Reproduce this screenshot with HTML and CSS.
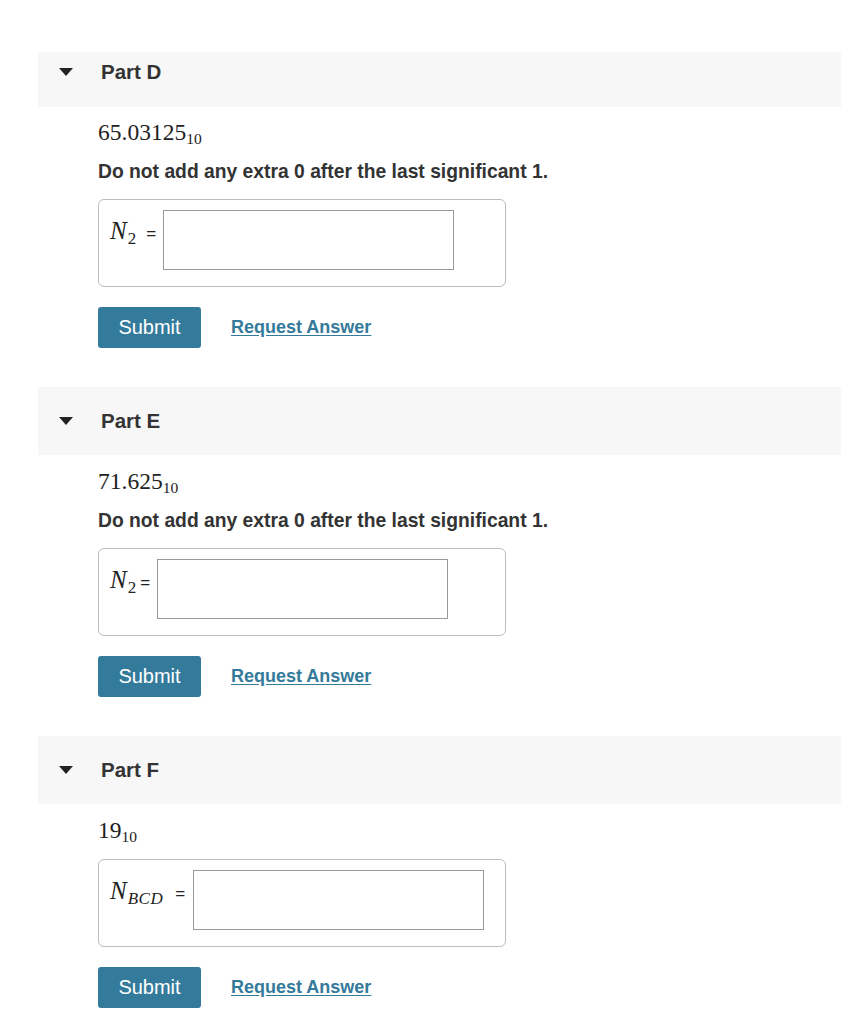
FILE: index.html
```html
<!DOCTYPE html>
<html lang="en">
<head>
<meta charset="utf-8">
<title>Parts</title>
<link rel="stylesheet" href="styles.css">
</head>
<body>
<main class="page">
  <section class="part">
    <div class="part-header part-header--first">
      <span class="caret"></span>
      <h2 class="part-title">Part D</h2>
    </div>
    <div class="part-body part-body--first">
      <div class="math-line"><span class="num">65.03125<sub class="sub">10</sub></span></div>
      <p class="note">Do not add any extra 0 after the last significant 1.</p>
      <div class="answer-box">
        <span class="label"><i class="var">N</i><sub class="lsub">2</sub><span class="eq eq--spaced">=</span></span>
        <input class="answer-input" type="text" aria-label="N2">
      </div>
      <div class="actions">
        <button class="submit" type="button">Submit</button>
        <a class="request" href="#">Request Answer</a>
      </div>
    </div>
  </section>

  <section class="part">
    <div class="part-header">
      <span class="caret"></span>
      <h2 class="part-title">Part E</h2>
    </div>
    <div class="part-body">
      <div class="math-line"><span class="num">71.625<sub class="sub">10</sub></span></div>
      <p class="note">Do not add any extra 0 after the last significant 1.</p>
      <div class="answer-box">
        <span class="label"><i class="var">N</i><sub class="lsub">2</sub><span class="eq">=</span></span>
        <input class="answer-input" type="text" aria-label="N2">
      </div>
      <div class="actions">
        <button class="submit" type="button">Submit</button>
        <a class="request" href="#">Request Answer</a>
      </div>
    </div>
  </section>

  <section class="part">
    <div class="part-header">
      <span class="caret"></span>
      <h2 class="part-title">Part F</h2>
    </div>
    <div class="part-body">
      <div class="math-line"><span class="num">19<sub class="sub">10</sub></span></div>
      <div class="answer-box">
        <span class="label"><i class="var">N</i><sub class="lsub lsub--it">BCD</sub><span class="eq eq--wide">=</span></span>
        <input class="answer-input" type="text" aria-label="NBCD">
      </div>
      <div class="actions">
        <button class="submit" type="button">Submit</button>
        <a class="request" href="#">Request Answer</a>
      </div>
    </div>
  </section>
</main>
</body>
</html>
```

FILE: styles.css
```css
* { box-sizing: border-box; }

html, body {
  margin: 0;
  padding: 0;
  background: #fff;
}

body {
  font-family: "Liberation Sans", Arial, sans-serif;
  color: #333;
}

.page {
  padding: 52px 0 0 38px;
}

.part-header {
  height: 68px;
  background: #f7f7f7;
  display: flex;
  align-items: center;
  padding-left: 21px;
}

.part-header--first {
  height: 55px;
  padding-bottom: 15px;
}

.caret {
  width: 0;
  height: 0;
  border-left: 7px solid transparent;
  border-right: 7px solid transparent;
  border-top: 8px solid #222;
}

.part-title {
  margin: 0 0 0 28px;
  font-size: 20.5px;
  font-weight: bold;
  color: #333;
  line-height: 24px;
}

.part-body {
  padding: 14px 0 39px 60px;
}

.part-body--first {
  padding-top: 13px;
}

.math-line {
  height: 24px;
  line-height: 24px;
  font-family: "Liberation Serif", "Times New Roman", serif;
  font-size: 23.5px;
  color: #222;
}

.sub {
  font-size: 0.66em;
  vertical-align: -0.26em;
  line-height: 0;
}

.note {
  margin: 18px 0 0;
  font-size: 19.3px;
  line-height: 20px;
  font-weight: bold;
  color: #333;
}

.answer-box {
  margin-top: 17px;
  width: 408px;
  height: 88px;
  border: 1px solid #bdbdbd;
  border-radius: 6px;
  padding: 10px 0 0 11px;
  display: flex;
  align-items: flex-start;
}

.label {
  display: flex;
  align-items: baseline;
  margin-top: 9px;
  line-height: 24px;
  font-family: "Liberation Serif", "Times New Roman", serif;
  font-size: 25px;
  color: #222;
}

.var {
  font-style: italic;
}

.lsub {
  font-size: 0.68em;
  font-style: normal;
  position: relative;
  top: 5px;
  margin-left: 1px;
}

.lsub--it {
  font-style: italic;
  letter-spacing: 0.5px;
}

.eq {
  font-family: "Liberation Sans", Arial, sans-serif;
  font-size: 17px;
  margin-left: 4px;
  margin-right: 7px;
}

.eq--spaced {
  margin-left: 10px;
  margin-right: 7px;
}

.eq--wide {
  margin-left: 12px;
  margin-right: 8px;
}

.answer-input {
  height: 60px;
  width: 291px;
  border: 1px solid #9a9a9a;
  border-radius: 0;
  background: #fff;
  margin: 0;
  padding: 0 6px;
  font-size: 18px;
}

.actions {
  margin-top: 20px;
  display: flex;
  align-items: center;
}

.submit {
  width: 103px;
  height: 41px;
  background: #347a9b;
  color: #fff;
  border: none;
  border-radius: 3px;
  font-family: "Liberation Sans", Arial, sans-serif;
  font-size: 20px;
  padding: 0;
  cursor: pointer;
}

.request {
  margin-left: 30px;
  font-size: 18px;
  font-weight: bold;
  color: #347a9b;
  text-decoration: underline;
  text-underline-offset: 2px;
}
```
